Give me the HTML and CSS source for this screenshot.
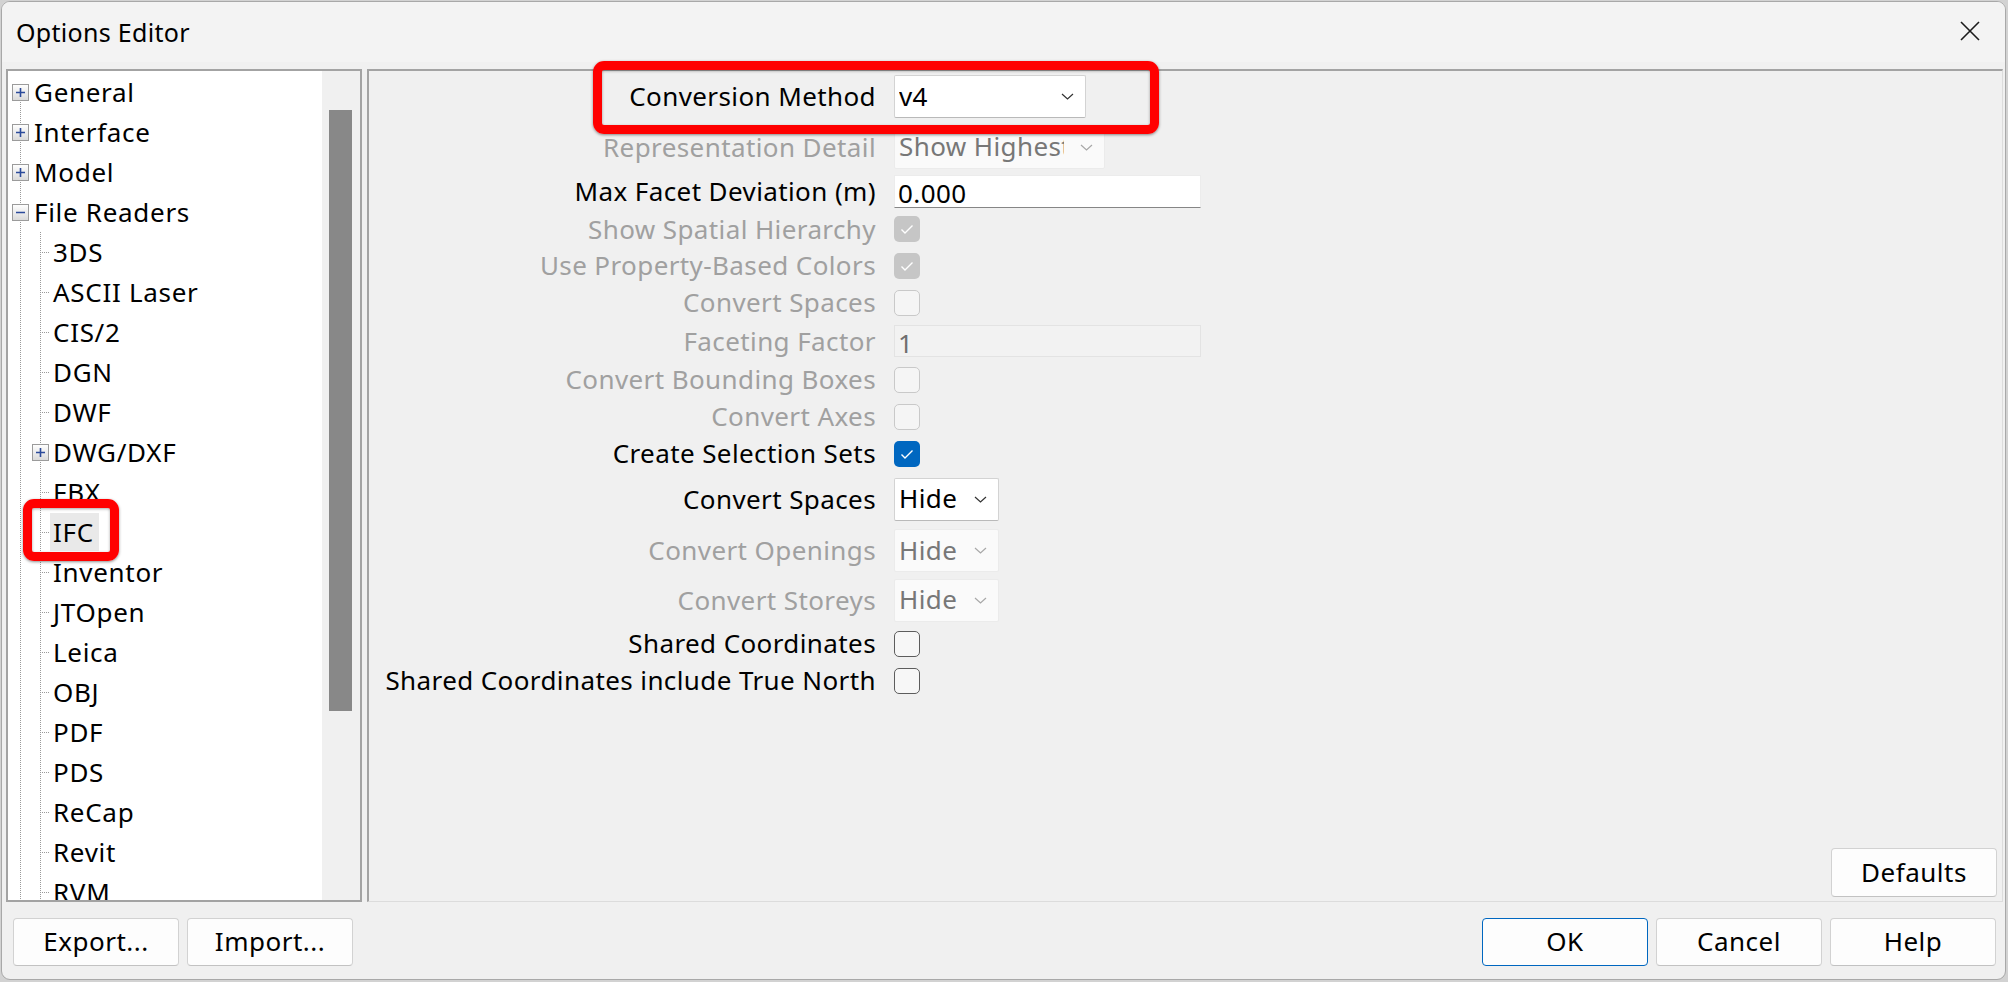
FILE: index.html
```html
<html>
<head>
<title>Options Editor</title>
<link rel="stylesheet" href="styles.css">
</head>
<body>

<div class="window">

  <div class="titlebar">
    <span class="title">Options Editor</span>
    <svg class="close" width="20" height="20" viewBox="0 0 20 20"><path d="M1 1 L19 19 M19 1 L1 19" stroke="#1b1b1b" stroke-width="1.6" fill="none"/></svg>
  </div>

  <div class="main">

    <div class="treebox">
      <div class="tree">
        <div class="node"><span class="lane first"><svg class="exp" width="17" height="17" viewBox="0 0 17 17"><rect x="0.5" y="0.5" width="16" height="16" fill="url(#g)" stroke="#9b9b9b"/><path d="M4 8.5 H13 M8.5 4 V13" stroke="#2b4a9a" stroke-width="1.6"/><defs><linearGradient id="g" x1="0" y1="0" x2="0" y2="1"><stop offset="0" stop-color="#ffffff"/><stop offset="1" stop-color="#d9d9d9"/></linearGradient></defs></svg></span><span class="txt">General</span></div>
        <div class="node"><span class="lane"><svg class="exp" width="17" height="17" viewBox="0 0 17 17"><rect x="0.5" y="0.5" width="16" height="16" fill="url(#g)" stroke="#9b9b9b"/><path d="M4 8.5 H13 M8.5 4 V13" stroke="#2b4a9a" stroke-width="1.6"/></svg></span><span class="txt">Interface</span></div>
        <div class="node"><span class="lane"><svg class="exp" width="17" height="17" viewBox="0 0 17 17"><rect x="0.5" y="0.5" width="16" height="16" fill="url(#g)" stroke="#9b9b9b"/><path d="M4 8.5 H13 M8.5 4 V13" stroke="#2b4a9a" stroke-width="1.6"/></svg></span><span class="txt">Model</span></div>
        <div class="node"><span class="lane"><svg class="exp" width="17" height="17" viewBox="0 0 17 17"><rect x="0.5" y="0.5" width="16" height="16" fill="url(#g)" stroke="#9b9b9b"/><path d="M4 8.5 H13" stroke="#2b4a9a" stroke-width="1.6"/></svg></span><span class="txt">File Readers</span></div>
        <div class="node"><span class="lane"></span><span class="lane2"></span><span class="txt">3DS</span></div>
        <div class="node"><span class="lane"></span><span class="lane2"></span><span class="txt">ASCII Laser</span></div>
        <div class="node"><span class="lane"></span><span class="lane2"></span><span class="txt">CIS/2</span></div>
        <div class="node"><span class="lane"></span><span class="lane2"></span><span class="txt">DGN</span></div>
        <div class="node"><span class="lane"></span><span class="lane2"></span><span class="txt">DWF</span></div>
        <div class="node"><span class="lane"></span><span class="lane2 sub"><svg class="exp" width="17" height="17" viewBox="0 0 17 17"><rect x="0.5" y="0.5" width="16" height="16" fill="url(#g)" stroke="#9b9b9b"/><path d="M4 8.5 H13 M8.5 4 V13" stroke="#2b4a9a" stroke-width="1.6"/></svg></span><span class="txt">DWG/DXF</span></div>
        <div class="node"><span class="lane"></span><span class="lane2"></span><span class="txt">FBX</span></div>
        <div class="node"><span class="lane"></span><span class="lane2"></span><span class="txt current">IFC</span></div>
        <div class="node"><span class="lane"></span><span class="lane2"></span><span class="txt">Inventor</span></div>
        <div class="node"><span class="lane"></span><span class="lane2"></span><span class="txt">JTOpen</span></div>
        <div class="node"><span class="lane"></span><span class="lane2"></span><span class="txt">Leica</span></div>
        <div class="node"><span class="lane"></span><span class="lane2"></span><span class="txt">OBJ</span></div>
        <div class="node"><span class="lane"></span><span class="lane2"></span><span class="txt">PDF</span></div>
        <div class="node"><span class="lane"></span><span class="lane2"></span><span class="txt">PDS</span></div>
        <div class="node"><span class="lane"></span><span class="lane2"></span><span class="txt">ReCap</span></div>
        <div class="node"><span class="lane"></span><span class="lane2"></span><span class="txt">Revit</span></div>
        <div class="node"><span class="lane"></span><span class="lane2"></span><span class="txt">RVM</span></div>
      </div>
      <div class="scroll"><div class="thumb"></div></div>
    </div>

    <div class="panel">
      <div class="form">

        <div class="label">Conversion Method</div>
        <div class="ctl"><div class="combo conv"><span class="val">v4</span><svg class="chev" width="13" height="7" viewBox="0 0 13 7"><path d="M1 1 L6.5 6 L12 1" stroke="#333" stroke-width="1.2" fill="none"/></svg></div></div>

        <div class="label off">Representation Detail</div>
        <div class="ctl"><div class="combo repr dis"><span class="val">Show Highest</span><svg class="chev" width="13" height="7" viewBox="0 0 13 7"><path d="M1 1 L6.5 6 L12 1" stroke="#a8a8a8" stroke-width="1.2" fill="none"/></svg></div></div>

        <div class="label">Max Facet Deviation (m)</div>
        <div class="ctl"><div class="edit">0.000</div></div>

        <div class="label off">Show Spatial Hierarchy</div>
        <div class="ctl"><span class="check dis on"><svg width="26" height="26" viewBox="0 0 26 26"><path d="M7.5 13.5 L11 17 L18.5 9.5" stroke="#fff" stroke-width="1.4" fill="none"/></svg></span></div>

        <div class="label off">Use Property-Based Colors</div>
        <div class="ctl"><span class="check dis on"><svg width="26" height="26" viewBox="0 0 26 26"><path d="M7.5 13.5 L11 17 L18.5 9.5" stroke="#fff" stroke-width="1.4" fill="none"/></svg></span></div>

        <div class="label off">Convert Spaces</div>
        <div class="ctl"><span class="check dis"></span></div>

        <div class="label off">Faceting Factor</div>
        <div class="ctl"><div class="edit dis">1</div></div>

        <div class="label off">Convert Bounding Boxes</div>
        <div class="ctl"><span class="check dis"></span></div>

        <div class="label off">Convert Axes</div>
        <div class="ctl"><span class="check dis"></span></div>

        <div class="label">Create Selection Sets</div>
        <div class="ctl"><span class="check on"><svg width="26" height="26" viewBox="0 0 26 26"><path d="M7.5 13.5 L11 17 L18.5 9.5" stroke="#fff" stroke-width="1.4" fill="none"/></svg></span></div>

        <div class="label">Convert Spaces</div>
        <div class="ctl"><div class="combo hide"><span class="val">Hide</span><svg class="chev" width="13" height="7" viewBox="0 0 13 7"><path d="M1 1 L6.5 6 L12 1" stroke="#333" stroke-width="1.2" fill="none"/></svg></div></div>

        <div class="label off">Convert Openings</div>
        <div class="ctl"><div class="combo hide dis"><span class="val">Hide</span><svg class="chev" width="13" height="7" viewBox="0 0 13 7"><path d="M1 1 L6.5 6 L12 1" stroke="#a8a8a8" stroke-width="1.2" fill="none"/></svg></div></div>

        <div class="label off">Convert Storeys</div>
        <div class="ctl"><div class="combo hide dis"><span class="val">Hide</span><svg class="chev" width="13" height="7" viewBox="0 0 13 7"><path d="M1 1 L6.5 6 L12 1" stroke="#a8a8a8" stroke-width="1.2" fill="none"/></svg></div></div>

        <div class="label">Shared Coordinates</div>
        <div class="ctl"><span class="check"></span></div>

        <div class="label">Shared Coordinates include True North</div>
        <div class="ctl"><span class="check"></span></div>

      </div>

      <button class="button defaults">Defaults</button>
    </div>

  </div>

  <div class="bottom">
    <button class="button">Export...</button>
    <button class="button">Import...</button>
    <span class="spacer"></span>
    <button class="button ok">OK</button>
    <button class="button">Cancel</button>
    <button class="button">Help</button>
  </div>

  <!-- annotation boxes drawn over the dialog -->
  <div class="mark mark-method"></div>
  <div class="mark mark-ifc"></div>

</div>

</body>
</html>
```

FILE: styles.css
```css
html {
  background-color: #d2d2d2;
}

body {
  margin: 0;
  font-family: "Noto Sans", "Open Sans", sans-serif;
  font-size: 26px;
  color: #000;
}

.window {
  position: relative;
  box-sizing: border-box;
  width: 2005px;
  height: 979px;
  margin: 1px 0 0 1px;
  border: 1px solid #a8a8a8;
  border-radius: 9px;
  background-color: #f0f0f0;
  overflow: hidden;
  display: flex;
  flex-direction: column;
}

.titlebar {
  height: 60px;
  flex: none;
  background-color: #f3f3f3;
  display: flex;
  align-items: center;
  padding: 0 25px 0 14px;
}

.title {
  flex: 1;
  font-size: 25px;
  letter-spacing: 0.3px;
}

.close {
  display: block;
  margin-top: -2px;
}

.main {
  flex: none;
  height: 833px;
  padding: 7px 2px 0 4px;
  display: flex;
  gap: 5px;
}

/* tree on the left */

.treebox {
  box-sizing: border-box;
  width: 356px;
  height: 833px;
  border: 2px solid #a3a3a3;
  display: flex;
  background-color: #fff;
}

.tree {
  flex: 1;
  padding-top: 1px;
  overflow: hidden;
  letter-spacing: 0.7px;
}

.node {
  height: 40px;
  display: flex;
  align-items: center;
  white-space: nowrap;
}

.lane {
  width: 23px;
  height: 40px;
  flex: none;
  box-sizing: border-box;
  padding-left: 4px;
  display: flex;
  align-items: center;
  background-image: repeating-linear-gradient(to bottom, #9a9a9a 0 1px, transparent 1px 2px);
  background-size: 1px 100%;
  background-position: 12px 0;
  background-repeat: no-repeat;
}

.lane.first {
  background-size: 1px 20px;
  background-position: 12px 20px;
}

.lane2 {
  width: 19px;
  height: 40px;
  flex: none;
  box-sizing: border-box;
  padding-left: 1px;
  display: flex;
  align-items: center;
  background-image:
    repeating-linear-gradient(to bottom, #9a9a9a 0 1px, transparent 1px 2px),
    repeating-linear-gradient(to right, #9a9a9a 0 1px, transparent 1px 2px);
  background-size: 1px 100%, 10px 1px;
  background-position: 9px 0, 9px 20px;
  background-repeat: no-repeat;
}

.exp {
  display: block;
}

.txt {
  padding-left: 3px;
  line-height: 38px;
}

.txt.current {
  background-color: #e9e9e9;
  padding-right: 5px;
}

.scroll {
  width: 38px;
  flex: none;
  background-color: #f0f0f0;
}

.thumb {
  margin: 39px 8px 0 7px;
  height: 601px;
  background-color: #888888;
}

/* options panel on the right */

.panel {
  flex: 1;
  box-sizing: border-box;
  height: 833px;
  border-top: 2px solid #a3a3a3;
  border-left: 2px solid #a3a3a3;
  border-right: 1px solid #dcdcdc;
  border-bottom: 1px solid #dcdcdc;
  display: flex;
  flex-direction: column;
}

.form {
  display: grid;
  grid-template-columns: 507px auto;
  grid-template-rows: 51px 50px 39px 36px 37px 37px 40px 37px 37px 37px 54px 49px 50px 37px 37px;
  column-gap: 18px;
  align-items: center;
}

.label {
  text-align: right;
  white-space: nowrap;
  letter-spacing: 0.4px;
  margin-top: -1px;
}

.label.off {
  color: #a0a0a0;
}

.ctl {
  justify-self: start;
  display: flex;
}

.combo {
  box-sizing: border-box;
  height: 43px;
  display: flex;
  align-items: center;
  padding-left: 4px;
  background-color: #fff;
  border: 1px solid #d3d3d3;
  border-bottom-color: #b9b9b9;
  border-radius: 2px;
  letter-spacing: 0.4px;
}

.combo .val {
  flex: 1;
  overflow: hidden;
  white-space: nowrap;
  margin-top: -2px;
}

.combo .chev {
  flex: none;
  margin: 0 11px 0 8px;
}

.combo.dis {
  background-color: #fafafa;
  border-color: #ebebeb;
  color: #777777;
}

.repr .chev {
  margin-left: 16px;
}

.conv {
  width: 192px;
}

.repr {
  width: 211px;
}

.hide {
  width: 105px;
}

.edit {
  box-sizing: border-box;
  width: 307px;
  height: 33px;
  padding: 0 3px;
  line-height: 34px;
  background-color: #fff;
  border: 1px solid #ececec;
  border-bottom: 1px solid #868686;
  letter-spacing: 0.4px;
}

.edit.dis {
  height: 32px;
  background-color: #f2f2f2;
  border: 1px solid #e3e3e3;
  color: #6f6f6f;
}

.check {
  box-sizing: border-box;
  width: 26px;
  height: 26px;
  border-radius: 5px;
  border: 1px solid #5d5d5d;
  background-color: #f7f7f7;
  display: block;
}

.check svg {
  display: block;
  margin: -1px;
}

.check.dis {
  border-color: #c9c9c9;
  background-color: #f5f5f5;
}

.check.on {
  border: none;
  background-color: #0067c0;
}

.check.dis.on {
  background-color: #c6c6c6;
}

.check.on svg {
  margin: 0;
}

/* buttons */

.button {
  box-sizing: border-box;
  width: 166px;
  height: 48px;
  font-family: "Noto Sans", "Open Sans", sans-serif;
  font-size: 26px;
  letter-spacing: 0.5px;
  color: #000;
  background-color: #fdfdfd;
  border: 1px solid #d2d2d2;
  border-bottom-color: #c2c2c2;
  border-radius: 4px;
  padding: 0 0 2px 0;
}

.defaults {
  margin-top: auto;
  align-self: flex-end;
  margin-right: 5px;
  margin-bottom: 4px;
  height: 49px;
}

.ok {
  border: 1px solid #0067c0;
}

.bottom {
  flex: 1;
  display: flex;
  align-items: flex-start;
  padding: 16px 9px 0 11px;
  gap: 8px;
}

.spacer {
  flex: 1;
}

/* red highlight marks */

.mark {
  position: absolute;
  box-sizing: border-box;
  border: 9px solid #ff0000;
  border-radius: 11px;
  box-shadow: 0 1px 3px rgba(0, 0, 0, 0.45), inset 0 1px 3px rgba(0, 0, 0, 0.35);
}

.mark-method {
  left: 591px;
  top: 59px;
  width: 566px;
  height: 73px;
}

.mark-ifc {
  left: 21px;
  top: 497px;
  width: 96px;
  height: 62px;
}
```
